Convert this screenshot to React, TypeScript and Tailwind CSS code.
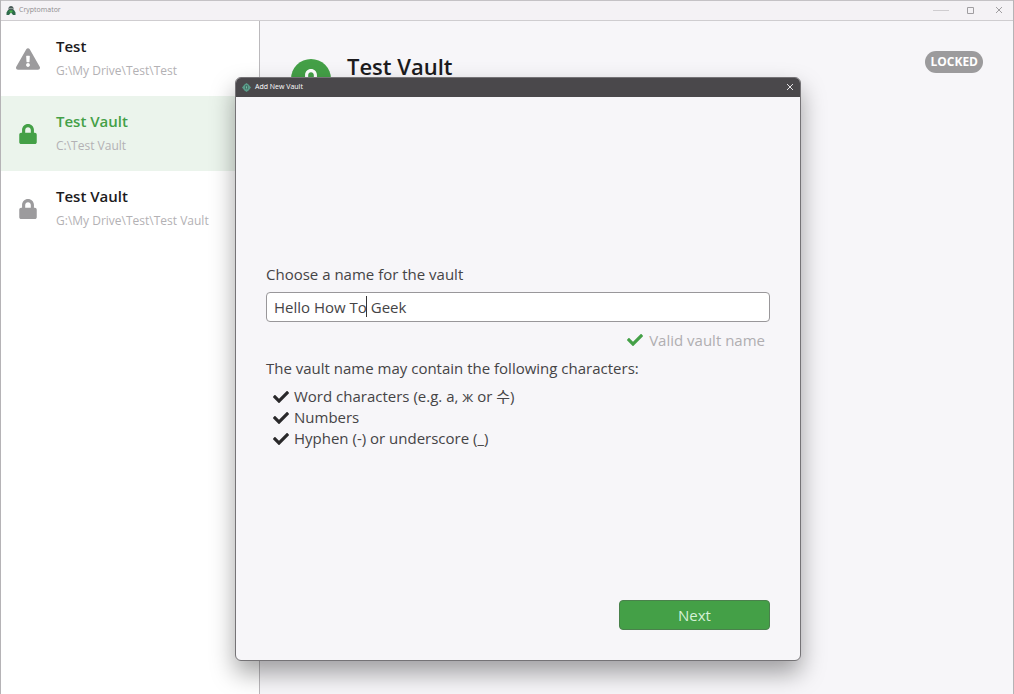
import { FaCheck, FaExclamationTriangle, FaLock } from "react-icons/fa"

type Vault = {
    id: number;
    name: string;
    path: string;
    status: "missing" | "locked";
}

const vaults: Vault[] = [
    { id: 1, name: "Test", path: "G:\\My Drive\\Test\\Test", status: "missing" },
    { id: 2, name: "Test Vault", path: "C:\\Test Vault", status: "locked" },
    { id: 3, name: "Test Vault", path: "G:\\My Drive\\Test\\Test Vault", status: "locked" },
]

const rules = ["Word characters (e.g. a, ж or 수)", "Numbers", "Hyphen (-) or underscore (_)"]

function BotLogo() {
    return (
        <svg viewBox="0 0 20 20" className="size-[10px]" aria-hidden="true">
            <path d="M10 0C7 0 5 2.200 5 5v4h10V5c0-2.800-2-5-5-5z" fill="#4a5a58" />
            <path d="M4 8h12l3 5v5h-5l-4-5-4 5H1v-5z" fill="#2f6b4c" />
            <path d="M7 9h6v3l-3 2-3-2z" fill="#49b04a" />
            <circle cx="8" cy="5" r="1.200" fill="#d5e8dc" />
            <circle cx="12" cy="5" r="1.200" fill="#d5e8dc" />
        </svg>
    )
}

function DialogLogo() {
    return (
        <svg viewBox="0 0 20 20" className="size-[9px]" aria-hidden="true">
            <path d="M10 0l5 4 5 6-5 6-5 4-5-4-5-6 5-6z" fill="#5a9c89" />
            <path d="M7 5h6v9H7z" fill="#3f6b62" />
            <path d="M9 7h2v5H9z" fill="#7fc3a8" />
        </svg>
    )
}

function TitleBar() {
    return (
        <header className="flex h-[21px] shrink-0 items-center border-y border-t-[#c4c2c5] border-b-[#cfcdd0] bg-[#f4f2f5] pl-[5px] pr-2.5">
            <BotLogo />
            <span className="ml-[3px] text-[7px] text-[#8f8d90]">Cryptomator</span>
            <div className="ml-auto flex items-center gap-4 text-[#a09ea1]">
                <button type="button" aria-label="Minimize">
                    <svg viewBox="0 0 16 8" className="h-2 w-4" stroke="#cfcdd0"><path d="M0 3.500h16" /></svg>
                </button>
                <button type="button" aria-label="Maximize">
                    <svg viewBox="0 0 10 8" className="h-2 w-2.5" fill="none" stroke="currentColor"><path d="M2.500 .5h6v6h-6z" /></svg>
                </button>
                <button type="button" aria-label="Close" className="ml-1">
                    <svg viewBox="0 0 8 8" className="size-2" stroke="currentColor"><path d="M1 0l6 6M7 0l-6 6" /></svg>
                </button>
            </div>
        </header>
    )
}

function VaultItem({ vault, selected }: { vault: Vault; selected: boolean }) {
    const Icon = vault.status === "missing" ? FaExclamationTriangle : FaLock

    return (
        <li>
            <button
                type="button"
                className={`flex h-[75px] w-full items-center pl-[15px] text-left ${selected ? "bg-[#ebf4ec]" : ""}`}
            >
                <span className="flex w-6 shrink-0 justify-center">
                    <Icon className={`${vault.status === "missing" ? "size-6" : "size-5"} ${selected ? "text-[#44a047]" : "text-[#9c9b9d]"}`} />
                </span>
                <span className="ml-4 flex flex-col gap-[5px]">
                    <span className={`text-[15px] leading-5 font-semibold ${selected ? "text-[#44a047]" : "text-[#1c1b1d]"}`}>
                        {vault.name}
                    </span>
                    <span className="text-xs leading-5 text-[#b3b1b4]">{vault.path}</span>
                </span>
            </button>
        </li>
    )
}

function AddVaultDialog() {
    return (
        <section
            role="dialog"
            aria-label="Add New Vault"
            className="absolute top-[77px] left-[234px] flex h-[584px] w-[566px] flex-col overflow-hidden rounded-md border border-[#757376] bg-[#f7f6f9] text-[15px] text-[#454446] shadow-[0_12px_24px_rgba(0,0,0,0.36)]"
        >
            <header className="flex h-[19px] shrink-0 items-center bg-[#4a484b] pr-1.5 pl-1.5">
                <DialogLogo />
                <span className="ml-1 text-[7px] text-white">Add New Vault</span>
                <button type="button" aria-label="Close" className="ml-auto">
                    <svg viewBox="0 0 8 8" className="size-2" stroke="#e4e2e5"><path d="M1 0l6 6M7 0l-6 6" /></svg>
                </button>
            </header>
            <form className="flex flex-1 flex-col px-[30px] pb-[30px]">
                <div className="my-auto pt-4">
                    <label htmlFor="vault-name" className="block leading-5">Choose a name for the vault</label>
                    <div className="relative mt-2">
                        <input
                            id="vault-name"
                            type="text"
                            defaultValue="Hello How To Geek"
                            className="block h-[30px] w-full rounded border border-[#99979a] bg-white px-[7px] outline-none"
                        />
                        <span className="absolute top-1 left-[100px] h-[21px] w-px bg-[#353436]" />
                    </div>
                    <p className="mt-2 flex items-center justify-end gap-1.5 pr-[5px] leading-5 text-[#b0aeb1]">
                        <FaCheck className="size-4 text-[#44a047]" />
                        Valid vault name
                    </p>
                    <p className="mt-2 leading-5">The vault name may contain the following characters:</p>
                    <ul className="mt-2 pl-[7px]">
                        {rules.map((rule) => (
                            <li key={rule} className="flex items-center gap-[5px] leading-[21px]">
                                <FaCheck className="size-4 text-[#29282a]" />
                                {rule}
                            </li>
                        ))}
                    </ul>
                </div>
                <button type="submit" className="h-[30px] w-[151px] self-end rounded border border-[#4a814c] bg-[#44a047] text-[#d5f1d6]">
                    Next
                </button>
            </form>
        </section>
    )
}

export default function App() {
    return (
        <div className="relative flex min-h-screen flex-col overflow-hidden border-x border-[#b5b3b6] bg-[#f7f6f9] font-['Open_Sans','Noto_Sans_CJK_KR',sans-serif]">
            <TitleBar />
            <div className="flex flex-1">
                <aside className="w-[259px] shrink-0 border-r border-[#bbb9bc] bg-white">
                    <ul>
                        {vaults.map((vault) => (
                            <VaultItem key={vault.id} vault={vault} selected={vault.id === 2} />
                        ))}
                    </ul>
                </aside>
                <main className="flex flex-1 items-start px-[30px] pt-[30px]">
                    <span className="mt-2 ml-px flex size-10 shrink-0 items-center justify-center rounded-full bg-[#44a047] text-white">
                        <FaLock className="size-5" />
                    </span>
                    <h1 className="ml-4 text-[22px] leading-[30px] font-semibold text-[#1c1b1d]">Test Vault</h1>
                    <span className="ml-auto rounded-full bg-[#9c9b9d] px-[5px] text-xs leading-[22px] font-bold text-white">LOCKED</span>
                </main>
            </div>
            <AddVaultDialog />
        </div>
    )
}
